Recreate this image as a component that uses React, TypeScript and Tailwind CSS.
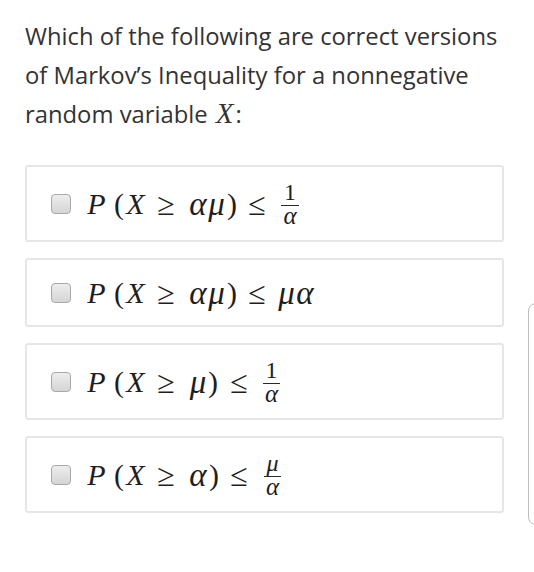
import type { ReactNode } from 'react'

const serif = "font-['Liberation_Serif',serif]"

// math glyph boxes: fixed widths keep the glyphs where the typeset reference has them
function Prefix() {
  return (
    <>
      <span className="w-[21px] shrink-0 text-center italic">P</span>
      <span className="ml-[7px] w-[7px] shrink-0 text-center">(</span>
      <span className="ml-[3px] w-[23px] shrink-0 text-center italic">X</span>
      <span className="ml-[10px] w-[18px] shrink-0 text-center text-[32px]">≥</span>
    </>
  )
}

function G({ children, className = '' }: { children: ReactNode; className?: string }) {
  return <span className={`shrink-0 text-center text-[33px] italic ${className}`}>{children}</span>
}

function Frac({ num, italicNum = false }: { num: string; italicNum?: boolean }) {
  return (
    <span className="flex w-full flex-col items-center text-[24px]">
      <span className={`h-[20px] leading-[20px] ${italicNum ? 'italic' : ''}`}>{num}</span>
      <span className="mt-[3px] h-px w-full bg-[#2a2a2a]" />
      <span className="h-[20px] text-[25px] leading-[20px] italic">α</span>
    </span>
  )
}

function Option({ children }: { children: ReactNode }) {
  return (
    <label className="flex items-center rounded-[3px] border-2 border-[#e6e6e6] bg-white pb-[14px] pl-[24px] pt-[15px]">
      <span className="h-[20px] w-[20px] shrink-0 rounded-[4px] border border-[#a9a9a9] bg-gradient-to-b from-[#ededed] to-[#d5d5d5]" />
      <span
        className={`${serif} ml-[15px] flex min-h-[36px] items-center text-[30px] leading-[34px] text-[#1e1e1e]`}
      >
        {children}
      </span>
    </label>
  )
}

export default function App() {
  return (
    <div className="relative h-[572px] w-[534px] overflow-hidden bg-white">
      <div className="pl-[25px] pr-[30px] pt-[17px]">
        <p className="-mr-[5px] font-['Open_Sans',sans-serif] text-[23.8px] leading-[38.5px] text-[#333]">
          Which of the following are correct versions of Markov’s Inequality for a nonnegative random
          variable <span className={`${serif} ml-[2px] mr-[2px] text-[29px] italic`}>X</span>:
        </p>

        <div className="mt-[31px] flex flex-col gap-[16px]">
          <Option>
            <Prefix />
            <G className="ml-[14px] w-[18px]">α</G>
            <G className="w-[19px]">μ</G>
            <span className="ml-[1px] w-[7px] shrink-0 text-center">)</span>
            <span className="ml-[13px] w-[20px] shrink-0 text-center text-[32px]">≤</span>
            <span className="ml-[14px] w-[18px] shrink-0">
              <Frac num="1" />
            </span>
          </Option>

          <Option>
            <Prefix />
            <G className="ml-[14px] w-[18px]">α</G>
            <G className="w-[19px]">μ</G>
            <span className="ml-[1px] w-[7px] shrink-0 text-center">)</span>
            <span className="ml-[13px] w-[20px] shrink-0 text-center text-[32px]">≤</span>
            <G className="ml-[10px] w-[19px]">μ</G>
            <G className="w-[18px]">α</G>
          </Option>

          <Option>
            <Prefix />
            <G className="ml-[14px] w-[18px]">μ</G>
            <span className="ml-[1px] w-[8px] shrink-0 text-center">)</span>
            <span className="ml-[13px] w-[20px] shrink-0 text-center text-[32px]">≤</span>
            <span className="ml-[14px] w-[17px] shrink-0">
              <Frac num="1" />
            </span>
          </Option>

          <Option>
            <Prefix />
            <G className="ml-[14px] w-[18px]">α</G>
            <span className="ml-[2px] w-[8px] shrink-0 text-center">)</span>
            <span className="ml-[12px] w-[20px] shrink-0 text-center text-[32px]">≤</span>
            <span className="ml-[15px] w-[17px] shrink-0">
              <Frac num="μ" italicNum />
            </span>
          </Option>
        </div>
      </div>

      {/* panel peeking in from the right edge */}
      <div className="absolute left-[528px] top-[303px] h-[222px] w-[40px] rounded-l-[8px] border border-[#bdbdbd] bg-white" />
    </div>
  )
}
